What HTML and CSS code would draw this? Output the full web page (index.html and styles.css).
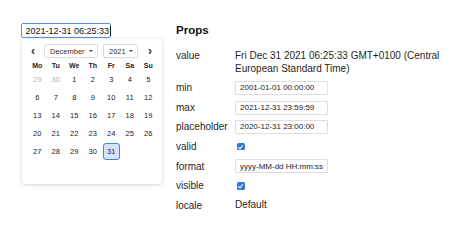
FILE: index.html
```html
<!DOCTYPE html>
<html>
<head>
<meta charset="utf-8">
<link rel="stylesheet" href="styles.css">
</head>
<body>
<div class="page">
  <div class="picker">
    <div class="field">2021-12-31 06:25:33<span class="caret"></span></div>
    <div class="popup">
      <div class="nav">
        <span class="arrow">&#8249;</span>
        <span class="select month">December<span class="tri"></span></span>
        <span class="select year">2021<span class="tri"></span></span>
        <span class="arrow">&#8250;</span>
      </div>
      <div class="weekdays">
        <span>Mo</span><span>Tu</span><span>We</span><span>Th</span><span>Fr</span><span>Sa</span><span>Su</span>
      </div>
      <div class="days">
        <span class="other">29</span><span class="other">30</span><span>1</span><span>2</span><span>3</span><span>4</span><span>5</span>
        <span>6</span><span>7</span><span>8</span><span>9</span><span>10</span><span>11</span><span>12</span>
        <span>13</span><span>14</span><span>15</span><span>16</span><span>17</span><span>18</span><span>19</span>
        <span>20</span><span>21</span><span>22</span><span>23</span><span>24</span><span>25</span><span>26</span>
        <span>27</span><span>28</span><span>29</span><span>30</span><span class="selected">31</span><span></span><span></span>
        <span></span><span></span><span></span><span></span><span></span><span></span><span></span>
      </div>
    </div>
  </div>
  <div class="props">
    <h2 class="title">Props</h2>
    <div class="grid">
      <div class="label top">value</div>
      <div class="val text">Fri Dec 31 2021 06:25:33 GMT+0100 (Central European Standard Time)</div>
      <div class="label">min</div>
      <div class="val"><span class="input">2001-01-01 00:00:00</span></div>
      <div class="label">max</div>
      <div class="val"><span class="input">2021-12-31 23:59:59</span></div>
      <div class="label">placeholder</div>
      <div class="val"><span class="input">2020-12-31 23:00:00</span></div>
      <div class="label">valid</div>
      <div class="val"><span class="check"></span></div>
      <div class="label">format</div>
      <div class="val"><span class="input">yyyy-MM-dd HH:mm:ss</span></div>
      <div class="label">visible</div>
      <div class="val"><span class="check"></span></div>
      <div class="label">locale</div>
      <div class="val text">Default</div>
    </div>
  </div>
</div>
</body>
</html>
```
FILE: styles.css
```css
html, body {
  margin: 0;
  padding: 0;
  background: #fff;
  font-family: "Liberation Sans", Arial, sans-serif;
  color: #1d1d1f;
}
.page {
  display: flex;
  padding: 23px 0 0 21px;
  gap: 14px;
}
.picker {
  position: relative;
  width: 141px;
  flex: none;
}
.field {
  box-sizing: border-box;
  width: 90px;
  height: 15px;
  border: 1.5px solid #5b8ee6;
  border-radius: 2px;
  font-size: 9px;
  line-height: 12px;
  padding-left: 3.5px;
  white-space: nowrap;
  color: #111;
  display: flex;
  align-items: center;
}
.caret {
  display: inline-block;
  width: 1px;
  height: 10px;
  margin-left: 0.5px;
  background: #111;
}
.popup {
  position: absolute;
  left: 1px;
  top: 16px;
  width: 140px;
  box-sizing: border-box;
  padding: 5px 6px 6px 5px;
  background: #fff;
  border-radius: 3px;
  box-shadow: 0 1px 4px rgba(0,0,0,0.16), 0 0 1px rgba(0,0,0,0.14);
}
.nav {
  display: flex;
  align-items: center;
  height: 14px;
}
.arrow {
  width: 10px;
  text-align: center;
  font-size: 12px;
  font-weight: 700;
  line-height: 14px;
  color: #333;
  margin-left: 1px;
}
.arrow:last-child {
  margin-left: auto;
  margin-right: 1px;
}
.select {
  box-sizing: border-box;
  height: 14px;
  border: 1px solid #dcdcdc;
  border-radius: 2px;
  font-size: 7.5px;
  color: #333;
  display: flex;
  align-items: center;
  justify-content: space-between;
  padding: 0 4px 0 5px;
}
.month {
  width: 54px;
  margin-left: 6px;
}
.year {
  width: 35px;
  margin-left: 5px;
}
.tri {
  width: 0;
  height: 0;
  border-left: 2.2px solid transparent;
  border-right: 2.2px solid transparent;
  border-top: 2.6px solid #444;
}
.weekdays, .days {
  display: grid;
  grid-template-columns: repeat(7, 18.5px);
  justify-content: start;
  margin-left: 1px;
}
.weekdays {
  margin-top: 2px;
  height: 11px;
  font-size: 7px;
  font-weight: 700;
  color: #222;
  align-items: center;
}
.weekdays span, .days span {
  text-align: center;
}
.days {
  grid-auto-rows: 17.9px;
  font-size: 7.5px;
  color: #222;
}
.days span {
  display: flex;
  align-items: center;
  justify-content: center;
}
.days .other {
  color: #b0b0b0;
}
.days .selected {
  box-sizing: border-box;
  margin: 0.6px 0.5px;
  background: #d6e4fb;
  border: 1.5px solid #4a7fd9;
  border-radius: 3px;
}
.props {
  flex: 1;
}
.title {
  margin: 0;
  font-size: 11.5px;
  font-weight: 700;
  line-height: 14px;
  color: #111;
}
.grid {
  display: grid;
  grid-template-columns: 59px 1fr;
  row-gap: 5.6px;
  margin-top: 11.5px;
  font-size: 10px;
  line-height: 13.4px;
  color: #1f1f1f;
}
.label, .val {
  display: flex;
  align-items: center;
  min-height: 14px;
}
.label.top {
  align-items: flex-start;
}
.val.text {
  display: block;
  padding-right: 30px;
}
.input {
  box-sizing: border-box;
  width: 93px;
  height: 14px;
  border: 1px solid #dedede;
  border-radius: 1px;
  font-size: 8px;
  padding-left: 4px;
  color: #222;
  white-space: nowrap;
  overflow: hidden;
  display: flex;
  align-items: center;
}
.check {
  width: 7.5px;
  height: 7.5px;
  margin-left: 2px;
  border-radius: 1.5px;
  background: #3476e0;
  position: relative;
}
.check::after {
  content: "";
  position: absolute;
  left: 2.4px;
  top: 0.7px;
  width: 1.8px;
  height: 4px;
  border: solid #fff;
  border-width: 0 1.1px 1.1px 0;
  transform: rotate(40deg);
}
```
